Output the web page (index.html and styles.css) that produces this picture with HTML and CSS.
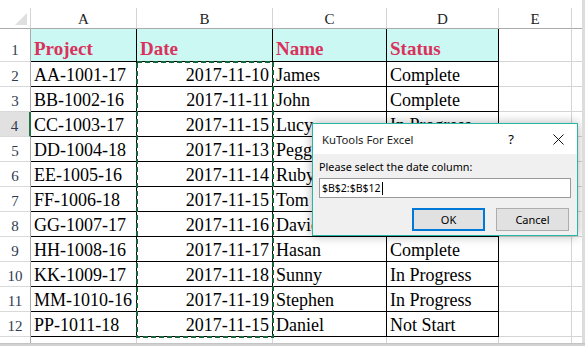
FILE: index.html
```html
<!DOCTYPE html>
<html>
<head>
<meta charset="utf-8">
<link rel="stylesheet" href="styles.css">
</head>
<body>
<div class="window">
  <div class="sheet">
    <div class="grid">
      <div class="corner"><span class="tri"></span></div>
      <div class="ch">A</div>
      <div class="ch">B</div>
      <div class="ch">C</div>
      <div class="ch">D</div>
      <div class="ch">E</div>
      <div class="ch last"></div>

      <div class="rh r1">1</div>
      <div class="c hd">Project</div>
      <div class="c hd">Date</div>
      <div class="c hd">Name</div>
      <div class="c hd">Status</div>
      <div class="c e"></div>
      <div class="c f"></div>

      <div class="rh">2</div><div class="c">AA-1001-17</div><div class="c dt">2017-11-10</div><div class="c">James</div><div class="c">Complete</div><div class="c e"></div><div class="c f"></div>
      <div class="rh">3</div><div class="c">BB-1002-16</div><div class="c dt">2017-11-11</div><div class="c">John</div><div class="c">Complete</div><div class="c e"></div><div class="c f"></div>
      <div class="rh act">4</div><div class="c">CC-1003-17</div><div class="c dt">2017-11-15</div><div class="c">Lucy</div><div class="c">In Progress</div><div class="c e"></div><div class="c f"></div>
      <div class="rh">5</div><div class="c">DD-1004-18</div><div class="c dt">2017-11-13</div><div class="c">Peggy</div><div class="c">Complete</div><div class="c e"></div><div class="c f"></div>
      <div class="rh">6</div><div class="c">EE-1005-16</div><div class="c dt">2017-11-14</div><div class="c">Ruby</div><div class="c">Complete</div><div class="c e"></div><div class="c f"></div>
      <div class="rh">7</div><div class="c">FF-1006-18</div><div class="c dt">2017-11-15</div><div class="c">Tom</div><div class="c">Complete</div><div class="c e"></div><div class="c f"></div>
      <div class="rh">8</div><div class="c">GG-1007-17</div><div class="c dt">2017-11-16</div><div class="c">David</div><div class="c">Complete</div><div class="c e"></div><div class="c f"></div>
      <div class="rh">9</div><div class="c">HH-1008-16</div><div class="c dt">2017-11-17</div><div class="c">Hasan</div><div class="c">Complete</div><div class="c e"></div><div class="c f"></div>
      <div class="rh">10</div><div class="c">KK-1009-17</div><div class="c dt">2017-11-18</div><div class="c">Sunny</div><div class="c">In Progress</div><div class="c e"></div><div class="c f"></div>
      <div class="rh">11</div><div class="c">MM-1010-16</div><div class="c dt">2017-11-19</div><div class="c">Stephen</div><div class="c">In Progress</div><div class="c e"></div><div class="c f"></div>
      <div class="rh">12</div><div class="c">PP-1011-18</div><div class="c dt">2017-11-15</div><div class="c">Daniel</div><div class="c">Not Start</div><div class="c e"></div><div class="c f"></div>
      <div class="rh r13">13</div><div class="c g"></div><div class="c g"></div><div class="c g"></div><div class="c g"></div><div class="c e"></div><div class="c f"></div>
    </div>

    <svg class="ants" width="138" height="277" viewBox="0 0 138 277">
      <rect x="1" y="1" width="136" height="275" fill="none" stroke="#17643a" stroke-width="2" stroke-dasharray="5 3" shape-rendering="crispEdges"/>
    </svg>

    <div class="dialog">
      <div class="dtitle">
        <span class="dname">KuTools For Excel</span>
        <span class="help">?</span>
        <svg class="close" width="11" height="11" viewBox="0 0 11 11"><path d="M0.5 0.5 L10.5 10.5 M10.5 0.5 L0.5 10.5" stroke="#111" stroke-width="1" fill="none"/></svg>
      </div>
      <div class="dbody">
        <div class="label">Please select the date column:</div>
        <div class="input">$B$2:$B$12<span class="caret"></span></div>
        <div class="buttons">
          <div class="btn ok">OK</div>
          <div class="btn">Cancel</div>
        </div>
      </div>
    </div>
  </div>
  <div class="bottombar"></div>
</div>
</body>
</html>
```

FILE: styles.css
```css
html, body {
  margin: 0;
  padding: 0;
  background: #ffffff;
}

.window {
  width: 585px;
  height: 346px;
  overflow: hidden;
  display: flex;
  flex-direction: column;
}

.sheet {
  position: relative;
  height: 343px;
  flex: none;
  overflow: hidden;
  padding-top: 8px;
  box-sizing: border-box;
  border-right: 3px solid #dcdcdc;
}

.bottombar {
  height: 3px;
  flex: none;
  background: #d2d2d2;
  border-top: 1px solid #c4c4c4;
  box-sizing: border-box;
}

.grid {
  display: grid;
  grid-template-columns: 31px 106px 136px 114px 112px 73px 1fr;
  grid-template-rows: 21px 33px repeat(11, 25px) 25px;
  font-family: "Liberation Serif", "Times New Roman", serif;
}

.grid > div {
  box-sizing: border-box;
  min-width: 0;
}

.corner {
  position: relative;
  border-right: 1px solid #d4d4d4;
  border-bottom: 1px solid #ababab;
  background: #ffffff;
}

.tri {
  position: absolute;
  right: 3px;
  bottom: 3px;
  width: 0;
  height: 0;
  border-left: 12px solid transparent;
  border-bottom: 12px solid #dfdfdf;
}

.ch {
  border-right: 1px solid #d4d4d4;
  border-bottom: 1px solid #ababab;
  font-size: 15px;
  color: #222;
  display: flex;
  align-items: center;
  justify-content: center;
  padding-top: 2px;
}

.ch.last {
  border-right: none;
}

.rh {
  border-right: 1px solid #ababab;
  border-bottom: 1px solid #d9d9d9;
  font-size: 15px;
  color: #2f3b52;
  display: flex;
  align-items: flex-end;
  justify-content: center;
  padding-bottom: 1px;
}

.rh.r1 {
  padding-bottom: 2px;
}

.rh.act {
  background: #e1e1e1;
  border-right: 2px solid #217346;
}

.c {
  border-right: 1px solid #000;
  border-bottom: 1px solid #000;
  font-size: 18px;
  color: #000;
  display: flex;
  align-items: flex-end;
  padding: 0 0 0 3px;
  white-space: nowrap;
  overflow: hidden;
}

.c.hd {
  background: #ccf8f3;
  color: #d9325d;
  font-weight: bold;
  font-size: 19px;
  padding-bottom: 1px;
}

.c.dt {
  justify-content: flex-end;
  padding-right: 3px;
}

.c.e {
  border-right: 1px solid #d4d4d4;
  border-bottom: 1px solid #d4d4d4;
}

.c.f {
  border-right: none;
  border-bottom: 1px solid #d4d4d4;
}

.c.g {
  border-bottom: none;
  border-right: 1px solid #d4d4d4;
}

/* marching-ants selection overlay over B2:B12 */
.ants {
  position: absolute;
  left: 136px;
  top: 61px;
  display: block;
  pointer-events: none;
}

.dialog {
  position: absolute;
  left: 312px;
  top: 123px;
  width: 266px;
  height: 113px;
  box-sizing: border-box;
  border: 1px solid #2ab5a2;
  background: #f0f0f0;
  box-shadow: 0 0 10px rgba(0, 0, 0, 0.3);
  font-family: "Noto Sans", "Open Sans", sans-serif;
  font-size: 11px;
  color: #000;
  display: flex;
  flex-direction: column;
}

.dtitle {
  height: 30px;
  background: #ffffff;
  display: flex;
  align-items: center;
  padding: 0 13px 0 9px;
}

.dname {
  flex: 1;
  font-size: 11.3px;
  color: #222;
}

.help {
  font-size: 13px;
  margin-right: 39px;
}

.close {
  display: block;
}

.dbody {
  flex: 1;
  padding: 5px 6px 0 6px;
}

.label {
  height: 16px;
  line-height: 16px;
  margin-bottom: 3px;
  font-size: 10.8px;
}

.input {
  height: 20px;
  box-sizing: border-box;
  border: 1px solid #9a9a9a;
  background: #fff;
  padding: 0 2px;
  line-height: 18px;
  display: flex;
  align-items: center;
  font-size: 10.5px;
}

.caret {
  display: inline-block;
  width: 1px;
  height: 13px;
  background: #000;
  margin-left: 1px;
}

.buttons {
  display: flex;
  justify-content: flex-end;
  gap: 11px;
  margin-top: 10px;
  padding-right: 2px;
}

.btn {
  width: 73px;
  height: 23px;
  box-sizing: border-box;
  border: 1px solid #adadad;
  background: #e1e1e1;
  display: flex;
  align-items: center;
  justify-content: center;
  font-size: 11px;
}

.btn.ok {
  border: 2px solid #0078d7;
}
```
